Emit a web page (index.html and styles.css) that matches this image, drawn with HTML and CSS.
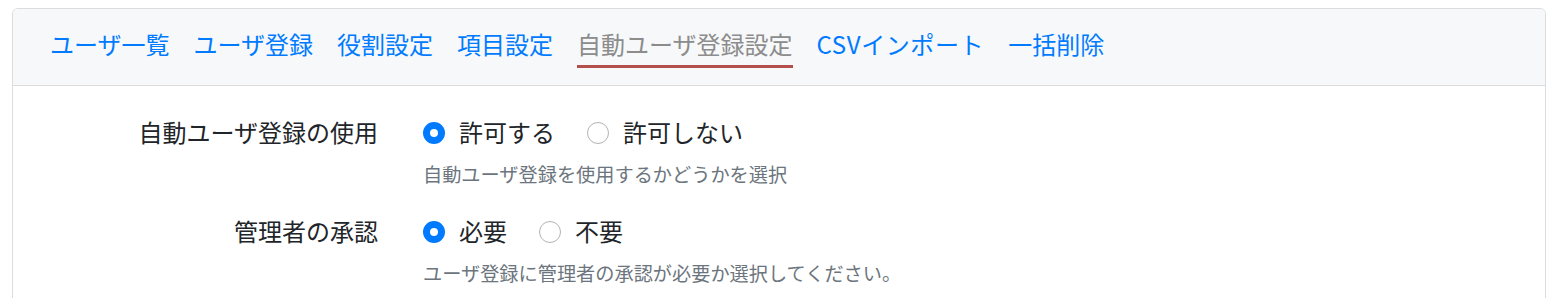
FILE: index.html
```html
<!DOCTYPE html>
<html lang="ja">
<head>
<meta charset="utf-8">
<title>自動ユーザ登録設定</title>
<link rel="stylesheet" href="styles.css">
</head>
<body>
<div class="card">
  <div class="card-header">
    <nav class="tabs">
      <a class="tab" href="#">ユーザ一覧</a>
      <a class="tab" href="#">ユーザ登録</a>
      <a class="tab" href="#">役割設定</a>
      <a class="tab" href="#">項目設定</a>
      <a class="tab active" href="#">自動ユーザ登録設定</a>
      <a class="tab tab-csv" href="#">CSVインポート</a>
      <a class="tab" href="#">一括削除</a>
    </nav>
  </div>
  <div class="card-body">
    <div class="form-row">
      <div class="form-label">自動ユーザ登録の使用</div>
      <div class="form-field">
        <div class="options">
          <label class="option"><span class="radio checked"></span><span class="option-text">許可する</span></label>
          <label class="option"><span class="radio"></span><span class="option-text">許可しない</span></label>
        </div>
        <div class="help">自動ユーザ登録を使用するかどうかを選択</div>
      </div>
    </div>
    <div class="form-row">
      <div class="form-label">管理者の承認</div>
      <div class="form-field">
        <div class="options">
          <label class="option"><span class="radio checked"></span><span class="option-text">必要</span></label>
          <label class="option"><span class="radio"></span><span class="option-text">不要</span></label>
        </div>
        <div class="help">ユーザ登録に管理者の承認が必要か選択してください。</div>
      </div>
    </div>
  </div>
</div>
</body>
</html>
```
FILE: styles.css
```css
html, body {
  margin: 0;
  padding: 0;
  background: #ffffff;
}
body {
  font-family: "Noto Sans CJK JP", "Noto Sans", sans-serif;
  color: #212529;
  padding: 8px 10px 0 12px;
  height: 298px;
  box-sizing: border-box;
  overflow: hidden;
}
.card {
  border: 1px solid #dcdcdc;
  border-radius: 6px;
  background: #fff;
  overflow: hidden;
  height: 400px;
}
.card-header {
  background: #f7f8fa;
  border-bottom: 1px solid #dcdcdc;
  padding: 19px 37px 17px;
}
.tabs {
  display: flex;
  gap: 24px;
}
.tab {
  font-size: 24px;
  line-height: 32px;
  color: #007bff;
  text-decoration: none;
  padding-bottom: 5px;
  border-bottom: 3px solid transparent;
}
.tab.active {
  color: #8c8c8c;
  border-bottom-color: #b3504e;
}
.tab-csv {
  letter-spacing: 0.6px;
}
.card-body {
  padding-top: 30px;
}
.form-row {
  display: flex;
  margin-bottom: 27px;
}
.form-label {
  width: 410px;
  text-align: right;
  font-size: 24px;
  line-height: 32px;
  padding-right: 45px;
  box-sizing: border-box;
  flex: none;
}
.form-field {
  display: flex;
  flex-direction: column;
}
.options {
  display: flex;
  gap: 32px;
  height: 32px;
  margin-bottom: 12px;
}
.option {
  display: flex;
  align-items: center;
  gap: 14px;
  font-size: 24px;
  line-height: 32px;
}
.radio {
  width: 22px;
  height: 22px;
  border-radius: 50%;
  box-sizing: border-box;
  border: 1px solid #b3b3b3;
  background: #fff;
  flex: none;
  margin-top: 2px;
}
.radio.checked {
  border: 7px solid #007bff;
  background: #fff;
}
.help {
  font-size: 19.2px;
  line-height: 28px;
  color: #6c757d;
}
```
